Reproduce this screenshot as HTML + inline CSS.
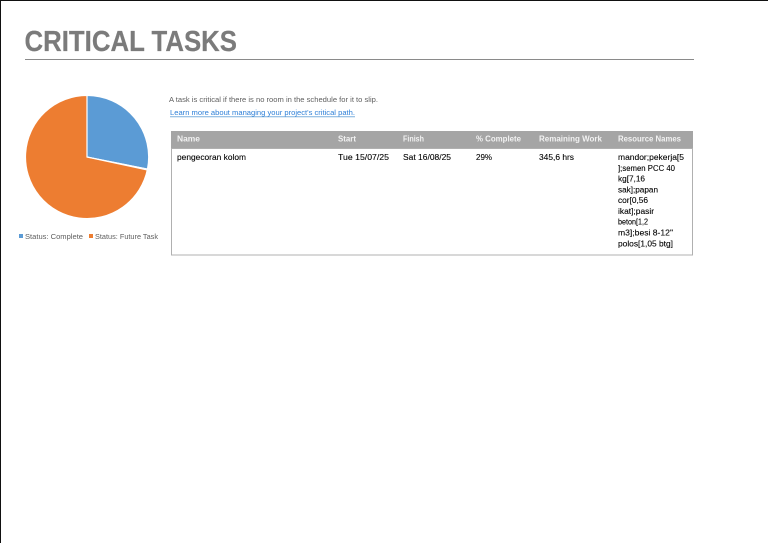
<!DOCTYPE html>
<html>
<head>
<meta charset="utf-8">
<style>
html,body{margin:0;padding:0;background:#fff;width:768px;height:543px;overflow:hidden}
svg{position:absolute;left:0;top:0;display:block}
text{font-family:"Liberation Sans",sans-serif}
.h{font-size:8.4px;font-weight:bold;fill:#f2f2f2}
.b{font-size:8.6px;fill:#000;stroke:#000;stroke-width:.1px}
.g{font-size:7.6px;fill:#5f5f5f}
</style>
</head>
<body>
<svg width="768" height="543" viewBox="0 0 768 543" xmlns="http://www.w3.org/2000/svg">
<rect x="0" y="0" width="768" height="1" fill="#111"/>
<rect x="0" y="0" width="1" height="543" fill="#111"/>
<g style="filter:blur(0.35px)">
<text x="24.5" y="51.2" font-size="28.5" font-weight="bold" fill="#7b7b7b" stroke="#7b7b7b" stroke-width="0.2" textLength="212.5" lengthAdjust="spacingAndGlyphs">CRITICAL TASKS</text>
<rect x="25" y="59" width="669" height="1" fill="#8a8a8a"/>

<path d="M87 157 L87 95.5 A61.5 61.5 0 0 1 147.4 169 Z" fill="#5b9bd5" stroke="#fff" stroke-width="1"/>
<path d="M87 157 L147.4 169 A61.5 61.5 0 1 1 87 95.5 Z" fill="#ed7d31" stroke="#fff" stroke-width="1"/>
<path d="M87 95 L87 157 L147.6 170" fill="none" stroke="#fff" stroke-width="1.2"/>

<rect x="19" y="234" width="4" height="4" fill="#5b9bd5"/>
<text class="g" x="25" y="239" textLength="58" lengthAdjust="spacingAndGlyphs">Status: Complete</text>
<rect x="89" y="234" width="4" height="4" fill="#ed7d31"/>
<text class="g" x="95" y="239" textLength="63" lengthAdjust="spacingAndGlyphs">Status: Future Task</text>

<text class="g" x="169" y="102" textLength="209" lengthAdjust="spacingAndGlyphs">A task is critical if there is no room in the schedule for it to slip.</text>
<text x="170" y="115" font-size="7.6" fill="#2f80d8" textLength="185" lengthAdjust="spacingAndGlyphs">Learn more about managing your project's critical path.</text>
<rect x="170" y="116.4" width="185" height="0.8" fill="#5b9bd5"/>

<rect x="171" y="131" width="522" height="18" fill="#a5a5a5"/>
<rect x="171.5" y="148.5" width="521" height="106.5" fill="#fff" stroke="#b0b0b0" stroke-width="1"/>

<text class="h" x="177" y="141.5" textLength="23" lengthAdjust="spacingAndGlyphs">Name</text>
<text class="h" x="338" y="141.5" textLength="18" lengthAdjust="spacingAndGlyphs">Start</text>
<text class="h" x="403" y="141.5" textLength="21" lengthAdjust="spacingAndGlyphs">Finish</text>
<text class="h" x="476" y="141.5" textLength="45" lengthAdjust="spacingAndGlyphs">% Complete</text>
<text class="h" x="539" y="141.5" textLength="63" lengthAdjust="spacingAndGlyphs">Remaining Work</text>
<text class="h" x="618" y="141.5" textLength="63" lengthAdjust="spacingAndGlyphs">Resource Names</text>

<text class="b" x="177" y="160" textLength="69" lengthAdjust="spacingAndGlyphs">pengecoran kolom</text>
<text class="b" x="338" y="160" textLength="51" lengthAdjust="spacingAndGlyphs">Tue 15/07/25</text>
<text class="b" x="403" y="160" textLength="48" lengthAdjust="spacingAndGlyphs">Sat 16/08/25</text>
<text class="b" x="476" y="160" textLength="16" lengthAdjust="spacingAndGlyphs">29%</text>
<text class="b" x="539" y="160" textLength="35" lengthAdjust="spacingAndGlyphs">345,6 hrs</text>

<text class="b" x="618" y="160" textLength="66" lengthAdjust="spacingAndGlyphs">mandor;pekerja[5</text>
<text class="b" x="618" y="171" textLength="57" lengthAdjust="spacingAndGlyphs">];semen PCC 40</text>
<text class="b" x="618" y="181.5" textLength="27" lengthAdjust="spacingAndGlyphs">kg[7,16</text>
<text class="b" x="618" y="192.5" textLength="40" lengthAdjust="spacingAndGlyphs">sak];papan</text>
<text class="b" x="618" y="203" textLength="30" lengthAdjust="spacingAndGlyphs">cor[0,56</text>
<text class="b" x="618" y="214" textLength="36" lengthAdjust="spacingAndGlyphs">ikat];pasir</text>
<text class="b" x="618" y="224.5" textLength="30" lengthAdjust="spacingAndGlyphs">beton[1,2</text>
<text class="b" x="618" y="235.5" textLength="55" lengthAdjust="spacingAndGlyphs">m3];besi 8-12"</text>
<text class="b" x="618" y="246.5" textLength="55" lengthAdjust="spacingAndGlyphs">polos[1,05 btg]</text>
</g>
</svg>
</body>
</html>
